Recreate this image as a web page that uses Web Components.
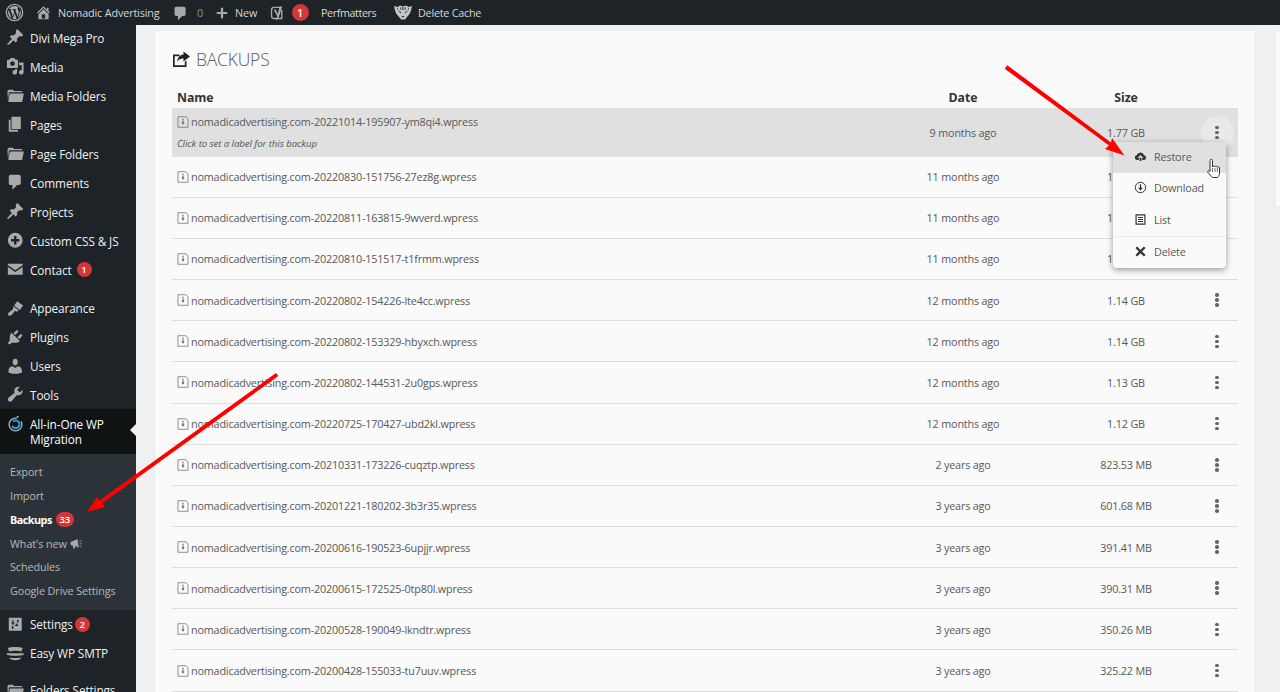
<!DOCTYPE html>
<html><head><meta charset="utf-8"><title>Backups</title>
<style>
html,body{margin:0;padding:0;height:692px;overflow:hidden;background:#f0f0f1;font-family:"Open Sans","Liberation Sans",sans-serif}
backup-app{display:block}
</style></head><body>
<backup-app></backup-app>
<script>
const ICONS={
wp:'<circle cx="10" cy="10" r="8.6" fill="none" stroke="currentColor" stroke-width="1.4"/><path fill="currentColor" d="M3.2 10c0 2.7 1.6 5 3.8 6.1L3.8 7.3C3.4 8.1 3.2 9 3.2 10zm11.4-.3c0-.8-.3-1.4-.6-1.9-.3-.5-.7-1-.7-1.5 0-.6.5-1.200 1.100-1.200h.1C13.300 3.900 11.700 3.200 10 3.200c-2.400 0-4.500 1.200-5.700 3.100h.4c.7 0 1.800-.1 1.800-.1.400 0 .4.500 0 .6 0 0-.4 0-.8.100l2.500 7.400 1.500-4.500-1.100-2.900c-.4 0-.7-.1-.7-.1-.4 0-.3-.6 0-.6 0 0 1.100.1 1.800.1.700 0 1.800-.1 1.800-.1.400 0 .4.500 0 .6 0 0-.4 0-.8.100l2.500 7.300.7-2.300c.3-.9.500-1.600.500-2.100zM10.100 10.700l-2 6c.6.200 1.200.3 1.900.3.800 0 1.600-.1 2.300-.4l-.100-.1-2.100-5.800zm5.800-3.900c0 .2.100.5.100.7 0 .7-.1 1.500-.5 2.500l-2.100 6c2-1.200 3.400-3.400 3.400-6 0-1.200-.3-2.300-.9-3.200z"/>',
home:'<path fill="currentColor" d="M16 8.500l1.530 1.530-1.060 1.060L10 4.620l-6.470 6.470-1.060-1.060L10 2.500l4 4v-2h2v4zm-6-2.460l6 5.990V18H4v-5.970zM12 17v-5H8v5h4z"/>',
comment:'<path fill="currentColor" d="M5 2h9c1.100 0 2 .9 2 2v7c0 1.100-.9 2-2 2h-2l-5 5v-5H5c-1.100 0-2-.9-2-2V4c0-1.100.9-2 2-2z"/>',
plus:'<path fill="currentColor" d="M8.400 2.500h3.200v5.900h5.900v3.200h-5.900v5.900H8.400v-5.900H2.500V8.400h5.900z"/>',
yoast:'<path fill="none" stroke="currentColor" stroke-width="1.600" d="M13 4H6a3 3 0 0 0-3 3v7a3 3 0 0 0 3 3h9V7"/><path fill="currentColor" d="M5.500 6.500h2.600l2 5.200 2.500-8.700h3l-4.300 13.300c-.5 1.500-1.500 2.500-3.300 2.700v-2.200c.9-.2 1.300-.7 1.500-1.400l.2-.7z"/>',
tiger:'<path fill="currentColor" d="M1 3l3.500 1L7 2.500l3 1 3-1L15.500 4 19 3l-1 4.500-1.500 3.500-2.500 3-2 2.500H8L6 14 3.500 11 2 7.500z"/><path fill="#1d2327" d="M5 7.500l3 1.500-.5 1.200zM15 7.500l-3 1.500.5 1.200zM8.500 13h3l-1.500 1.500zM4 4.500l1.500 2-1 .5zM16 4.500l-1.500 2 1 .5zM9.500 4h1v3h-1zM7 4.500l.8-.2.7 2.400-.7.2zM13 4.500l-.8-.2-.7 2.400.7.2z"/>',
pin:'<path fill="currentColor" d="M10.440 3.020l1.820-1.820 6.360 6.350-1.830 1.820c-1.050-.68-2.480-.57-3.410.36l-.75.75c-.92.930-1.040 2.350-.35 3.410l-1.830 1.820-2.410-2.410-2.800 2.790c-.42.420-3.380 2.710-3.800 2.290s1.860-3.390 2.280-3.810l2.790-2.790L4.100 9.360l1.830-1.820c1.050.690 2.480.570 3.400-.36l.75-.75c.930-.920 1.050-2.350.36-3.410z"/>',
media:'<path fill="currentColor" d="M13 11V4c0-.55-.45-1-1-1h-1.670L9 1H5L3.670 3H2c-.55 0-1 .45-1 1v7c0 .55.45 1 1 1h10c.55 0 1-.45 1-1zM7 4.500c1.380 0 2.500 1.120 2.500 2.500S8.380 9.500 7 9.500 4.500 8.380 4.500 7 5.620 4.500 7 4.500zM14 6h5v10.500c0 1.380-1.120 2.500-2.500 2.500S14 17.880 14 16.500s1.120-2.500 2.500-2.500c.17 0 .34.020.5.050V9h-3V6zm-4 8.050V13h2v3.500c0 1.380-1.120 2.500-2.500 2.500S7 17.880 7 16.500 8.120 14 9.500 14c.17 0 .34.020.5.050z"/>',
folder:'<path fill="currentColor" d="M1.500 6 2.800 4h4.700l1.200 1.300H17l.9 1.500H3.200L2.200 16zM4 8h15.300L17.500 17.200H2.500z"/>',
pages:'<path fill="currentColor" d="M6 15V2h10v13H6zm-1 1h8v2H3V5h2v11z"/>',
plusc:'<path fill="currentColor" fill-rule="evenodd" d="M10 2a8 8 0 1 0 0 16 8 8 0 0 0 0-16zm-1.300 3.500h2.600v3.200h3.200v2.600h-3.200v3.200H8.700v-3.200H5.500V8.700h3.200z"/>',
mail:'<path fill="currentColor" d="M2 4h16v1.700l-8 5.300-8-5.300zM2 7.600l8 5.300 8-5.300V16H2z"/>',
brush:'<path fill="currentColor" d="M12 2.500l6.500 4.500-3.500 4.800-6.300-4.500zM7.700 7.800l5.800 4.200-1.200 1.700-2.600-.7-4 4.500c-.8.900-2.200 1-3 .2-.8-.8-.7-2 .1-2.800l4.800-4.100z"/>',
plug:'<path fill="currentColor" d="M13.110 4.360L9.870 7.600 8 5.730l3.240-3.240c.35-.34 1.050-.2 1.560.32.52.51.66 1.210.31 1.550zm-8 1.770l.91-1.120 9.010 9.010-1.190.84c-.71.71-2.630 1.160-3.820 1.160H6.140L4.900 17.260c-.59.59-1.540.59-2.120 0-.59-.58-.59-1.530 0-2.120l1.240-1.240v-3.880c0-1.130.4-3.070 1.090-3.890zm7.260 3.970l3.240-3.240c.34-.35 1.040-.21 1.550.31.52.51.66 1.210.31 1.550l-3.240 3.250z"/>',
user:'<path fill="currentColor" d="M10 9.250c-2.270 0-2.730-3.440-2.730-3.440C7 4.020 7.820 2 9.970 2c2.160 0 2.980 2.020 2.710 3.810 0 0-.41 3.440-2.680 3.440zm0 2.570L12.720 10c2.390 0 4.520 2.330 4.520 4.530v2.490s-3.650 1.130-7.240 1.130c-3.650 0-7.240-1.130-7.240-1.130v-2.490c0-2.250 1.940-4.480 4.470-4.480z"/>',
wrench:'<path fill="currentColor" d="M16.680 9.770c-1.340 1.340-3.300 1.670-4.950.99l-5.410 6.520c-.99.99-2.590.99-3.570 0-.99-.98-.99-2.580 0-3.570l6.520-5.420c-.68-1.650-.35-3.610.99-4.950 1.280-1.280 3.120-1.620 4.720-1.060l-2.890 2.890 2.820 2.820 2.860-2.870c.53 1.580.18 3.390-1.090 4.650z"/>',
aio:'<circle cx="10" cy="10" r="7.500" fill="none" stroke="#a7aaad" stroke-width="1.700" stroke-dasharray="36 6"/><path fill="none" stroke="#1e9fd8" stroke-width="2.400" d="M6 11.500A4.500 4.500 0 1 0 7 6.500"/><path fill="#a7aaad" d="M11 0h3l-1.500 3z"/>',
settings:'<path fill="currentColor" fill-rule="evenodd" d="M3 3h14v14H3zM7 5v3H5.500L7.500 11 9.500 8H8V5zm5 10v-3h1.500l-2-3-2 3H12v3zM6.500 12v3h1.500v-3zM12 5v3h1.500V5z"/>',
smtp:'<path fill="currentColor" d="M2 4.500C5 3 15 3 18 4.500L16.500 8c-3-1-10-1-13 0zM1 10h18v1.800C15 13 5 13 1 11.800zM3.500 14.500c3 .9 10 .9 13 0-.5 2-3 3-6.500 3s-6-1-6.500-3z"/>',
share:'<path fill="currentColor" d="M2 5.500h6.500v1.700H3.700v9.100h10.100v-3.500l1.700-1.300V18H2zM12.500 2.500l6.500 5-6.500 5V9.500c-3 0-5 1-6.300 3.300C6.400 9 8.500 6 12.500 5.500z"/>',
file:'<path fill="none" stroke="currentColor" stroke-width="1.200" d="M1.600 1.200h13.200l3.600 3.400v14.200H1.600z"/><path fill="currentColor" d="M9 4.500h2v2H9zM9 7.500h2V11h1.700L10 14.500 7.300 11H9z"/>',
restore:'<path fill="currentColor" fill-rule="evenodd" d="M5 15.500a4 4 0 0 1-.6-7.900A5.800 5.800 0 0 1 15.500 8a3.800 3.800 0 0 1-.4 7.500h-2.600v-3.300h2L10 7.500l-4.500 4.700h2v3.300z"/><path fill="currentColor" d="M8.600 12h2.800v5H8.600z"/>',
download:'<circle cx="10" cy="10" r="8" fill="none" stroke="currentColor" stroke-width="1.500"/><path fill="currentColor" d="M9 5h2v5.500h2.800L10 14.800 6.200 10.500H9z"/>',
list:'<path fill="none" stroke="currentColor" stroke-width="1.800" d="M3.200 2.900h13.600v14.200H3.200z"/><path fill="currentColor" d="M6.200 6h7.600v1.500H6.200zM6.200 9.200h7.600v1.500H6.200zM6.200 12.400h7.600v1.500H6.200z"/>',
x:'<path fill="currentColor" d="M4.700 2.200 10 7.500l5.300-5.300 2.500 2.500L12.500 10l5.300 5.300-2.500 2.500L10 12.500l-5.300 5.300-2.500-2.500L7.500 10 2.200 4.700z"/>',
megaphone:'<path fill="currentColor" d="M2 8l11-5 2 13-6-2 .5 3.500-3-.2L6 13l-3-.5zM16 6.500l3-1.500v1.500l-3 1.500zM16.500 10H20v1.200h-3.500zM16 13l3 1.500v1.300l-3-1.500z"/>'
};
function svg(name,size,extra=''){return `<svg viewBox="0 0 20 20" width="${size}" height="${size}" style="display:block;flex:none;${extra}" aria-hidden="true">${ICONS[name]}</svg>`}

class AdminBar extends HTMLElement{constructor(){super();this.attachShadow({mode:'open'}).innerHTML=`<style>
:host{display:flex;align-items:center;height:25px;background:#1d2327;color:#d6d7d9;font-size:10.800px;letter-spacing:-.14px;flex:none}
span.t{white-space:nowrap}
.i{color:#a7aaad}
.row{display:flex;align-items:center}
b{display:flex;align-items:center;justify-content:center;width:17px;height:17px;border-radius:50%;background:#d63638;color:#fff;font-size:10px;font-weight:600}
</style>
<div class="row i" style="margin-left:5px;width:19px">${svg('wp',19)}</div>
<div class="row i" style="margin-left:11px;width:17px">${svg('home',17)}</div>
<span class="t" style="margin-left:6px;width:103px">Nomadic Advertising</span>
<div class="row i" style="margin-left:11px;width:16px;margin-top:2px">${svg('comment',17)}</div>
<span class="t" style="margin-left:9px;width:12px;color:#8c8f94">0</span>
<div class="row i" style="margin-left:6px;width:14px">${svg('plus',14)}</div>
<span class="t" style="margin-left:6px;width:24px">New</span>
<div class="row i" style="margin-left:10px;width:18px">${svg('yoast',17)}</div>
<b style="margin-left:4.500px">1</b>
<span class="t" style="margin-left:12.500px;width:58px;letter-spacing:-.42px">Perfmatters</span>
<div class="row i" style="margin-left:14px;width:19px;color:#c3c4c7">${svg('tiger',20)}</div>
<span class="t" style="margin-left:6px;letter-spacing:-.24px">Delete Cache</span>`}}
customElements.define('admin-bar',AdminBar);

class MenuItem extends HTMLElement{constructor(){super();const icon=this.getAttribute('icon');this.attachShadow({mode:'open'}).innerHTML=`<style>
:host{display:flex;align-items:center;height:var(--h,29px);color:#f0f0f1;font-size:11.800px;letter-spacing:-.12px;white-space:nowrap;box-sizing:border-box}
.ic{width:30px;display:flex;justify-content:center;color:#a7aaad;flex:none}
</style><div class="ic">${svg(icon,18.5)}</div><slot></slot>`}}
customElements.define('menu-item',MenuItem);

class CountBadge extends HTMLElement{constructor(){super();this.attachShadow({mode:'open'}).innerHTML=`<style>
:host{display:inline-flex;align-items:center;justify-content:center;min-width:15px;height:15px;box-sizing:border-box;padding:0 2px;border-radius:8px;background:#d63638;color:#fff;font-size:9.500px;font-weight:600;letter-spacing:0}
</style><slot></slot>`}}
customElements.define('count-badge',CountBadge);

class SubMenu extends HTMLElement{constructor(){super();this.attachShadow({mode:'open'}).innerHTML=`<style>
:host{display:flex;flex-direction:column;background:#2c3338;padding:6.500px 0 6.500px 10px;height:156px;box-sizing:border-box;color:#b4b9be;font-size:10.800px;letter-spacing:-.1px}
::slotted(div){height:23.750px;display:flex;align-items:center;white-space:nowrap}
</style><slot></slot>`}}
customElements.define('sub-menu',SubMenu);

class AdminSidebar extends HTMLElement{constructor(){super();this.attachShadow({mode:'open'}).innerHTML=`<style>
:host{display:block;width:135.500px;background:#1d2327;flex:none;height:667px;overflow:hidden}
</style><slot></slot>`}}
customElements.define('admin-sidebar',AdminSidebar);

class SidebarContent extends HTMLElement{constructor(){super();this.attachShadow({mode:'open'}).innerHTML=`<style>
:host{display:block}
.sep{height:9.500px}
.cur{background:#101314;height:45px;display:flex;align-items:center;position:relative;color:#fff;font-size:11.800px;letter-spacing:-.12px;line-height:15px;box-sizing:border-box;padding-top:1.500px}
.cur .ic{width:30px;display:flex;justify-content:center;flex:none;margin-top:-15px}
.cur:after{content:"";position:absolute;right:0;top:50%;margin-top:-7px;border:6.500px solid transparent;border-right-color:#f0f0f1;border-left:0}
count-badge{margin-left:4px}
sub-menu b{font-weight:700;color:#fff;letter-spacing:-.5px}
</style>
<menu-item icon="pin" style="--h:27px;padding-bottom:2px">Divi Mega Pro</menu-item>
<menu-item icon="media">Media</menu-item>
<menu-item icon="folder">Media Folders</menu-item>
<menu-item icon="pages">Pages</menu-item>
<menu-item icon="folder">Page Folders</menu-item>
<menu-item icon="comment">Comments</menu-item>
<menu-item icon="pin">Projects</menu-item>
<menu-item icon="plusc">Custom CSS &amp; JS</menu-item>
<menu-item icon="mail">Contact<count-badge style="margin-left:5px">1</count-badge></menu-item>
<div class="sep"></div>
<menu-item icon="brush">Appearance</menu-item>
<menu-item icon="plug">Plugins</menu-item>
<menu-item icon="user">Users</menu-item>
<menu-item icon="wrench" style="--h:28px">Tools</menu-item>
<div class="cur"><div class="ic">${svg('aio',17)}</div><div>All-in-One WP<br>Migration</div></div>
<sub-menu>
<div>Export</div><div>Import</div>
<div><b>Backups</b><count-badge style="min-width:18px">33</count-badge></div>
<div>What's new<span style="color:#a7aaad;margin-left:2px">${svg('megaphone',13)}</span></div>
<div>Schedules</div><div>Google Drive Settings</div>
</sub-menu>
<menu-item icon="settings">Settings<count-badge style="margin-left:2px">2</count-badge></menu-item>
<menu-item icon="smtp">Easy WP SMTP</menu-item>
<div style="height:8px"></div>
<menu-item icon="folder">Folders Settings</menu-item>`}}
customElements.define('sidebar-content',SidebarContent);

const GRID='grid-template-columns:1fr 130px 168px 42px;';
class BackupRow extends HTMLElement{constructor(){super();
const a=n=>this.getAttribute(n),active=this.hasAttribute('active');
this.attachShadow({mode:'open'}).innerHTML=`<style>
:host{display:grid;${GRID}align-items:center;height:${active?'48.600px':'41.170px'};box-sizing:border-box;${active?'background:#e0e0e0;':'border-bottom:1px solid #dedede;'}color:#585858;font-size:10.800px;letter-spacing:-.175px}
.n{padding-left:5px;display:flex;flex-direction:column}
.f{display:flex;align-items:center;gap:2px;white-space:nowrap}
.l{font-style:italic;font-size:9.700px;margin-top:${active?'8px':'0'};color:#555;letter-spacing:-.1px}
.d{text-align:center}.s{text-align:center;padding-left:28px}
.k{display:flex;justify-content:center;align-items:center;height:33px;width:33px;border-radius:50%;margin-left:4.500px;${active?'background:#e9e9e9':''}}
.k i{display:block;width:3.500px;height:3.500px;border-radius:50%;background:#666;box-shadow:0 -5px 0 #666,0 5px 0 #666}
</style>
<div class="n"><div class="f">${svg('file',12,'color:#666')}${a('name')}</div>${active?'<div class="l">Click to set a label for this backup</div>':''}</div>
<div class="d">${a('date')}</div><div class="s">${a('size')}</div><div class="k"><i></i></div>`}}
customElements.define('backup-row',BackupRow);

class ActionMenu extends HTMLElement{constructor(){super();this.attachShadow({mode:'open'}).innerHTML=`<style>
:host{position:absolute;left:1112.500px;top:142px;width:113.500px;height:125.500px;background:#fafafa;border-radius:4px;box-shadow:0 2px 6px rgba(0,0,0,.4);font-size:10.800px;color:#585858;letter-spacing:-.15px;overflow:hidden;z-index:3;display:flex;flex-direction:column}
.it{height:31px;display:flex;align-items:center;padding-left:21px;gap:7.500px;flex:none;padding-bottom:2px;box-sizing:border-box}
.it.li{padding-bottom:0}
.it svg{color:#333}
.it.h{background:#e0e0e0}
hr{margin:1px 0 0;border:0;border-top:1px solid #ececec}
</style>
<div class="it h">${svg('restore',13)}Restore</div>
<div class="it">${svg('download',13)}Download</div>
<div class="it li">${svg('list',13)}List</div>
<hr>
<div class="it">${svg('x',13)}Delete</div>`}}
customElements.define('action-menu',ActionMenu);

class BackupsCard extends HTMLElement{constructor(){super();
const rows=[
['20220830-151756-27ez8g','11 months ago','1.17 GB'],['20220811-163815-9wverd','11 months ago','1.16 GB'],['20220810-151517-t1frmm','11 months ago','1.15 GB'],
['20220802-154226-lte4cc','12 months ago','1.14 GB'],['20220802-153329-hbyxch','12 months ago','1.14 GB'],['20220802-144531-2u0gps','12 months ago','1.13 GB'],['20220725-170427-ubd2kl','12 months ago','1.12 GB'],
['20210331-173226-cuqztp','2 years ago','823.53 MB'],['20201221-180202-3b3r35','3 years ago','601.68 MB'],['20200616-190523-6upjjr','3 years ago','391.41 MB'],['20200615-172525-0tp80l','3 years ago','390.31 MB'],['20200528-190049-lkndtr','3 years ago','350.26 MB'],['20200428-155033-tu7uuv','3 years ago','325.22 MB']];
this.attachShadow({mode:'open'}).innerHTML=`<style>
:host{display:block;width:1100px;box-sizing:border-box;background:#fafafa;box-shadow:0 0 0 1px #ececec;padding:0 17px;height:700px;flex:none}
h1{margin:0;height:56px;display:flex;align-items:center;gap:5px;font-size:17.500px;font-weight:300;color:#5a5a5a;letter-spacing:-.2px;padding-bottom:1px;box-sizing:border-box}
h1 svg{color:#222;margin-left:-1px}
.h{display:grid;${GRID}height:21px;align-items:center;font-weight:700;font-size:12.300px;color:#333;letter-spacing:-.05px}
.h div:first-child{padding-left:5px}.h div:nth-child(2){text-align:center}.h div:nth-child(3){text-align:center;padding-left:28px}
</style>
<h1>${svg('share',20)}BACKUPS</h1>
<div class="h"><div>Name</div><div>Date</div><div>Size</div></div>
<backup-row active name="nomadicadvertising.com-20221014-195907-ym8qi4.wpress" date="9 months ago" size="1.77 GB"></backup-row>
${rows.map(r=>`<backup-row name="nomadicadvertising.com-${r[0]}.wpress" date="${r[1]}" size="${r[2]}"></backup-row>`).join('')}`}}
customElements.define('backups-card',BackupsCard);

class BackupApp extends HTMLElement{constructor(){super();this.attachShadow({mode:'open'}).innerHTML=`<style>
:host{display:flex;flex-direction:column;height:692px;overflow:hidden;position:relative}
.body{display:flex;flex:1;min-height:0}
.main{flex:1;display:flex;padding:6px 0 0 19.500px;gap:21px;overflow:hidden}
.side{width:10px;height:176px;background:#fafafa;box-shadow:0 0 0 1px #ececec;flex:none}
.over{position:absolute;left:0;top:0;z-index:5;pointer-events:none}
</style>
<admin-bar></admin-bar>
<div class="body"><admin-sidebar><sidebar-content></sidebar-content></admin-sidebar>
<div class="main"><backups-card></backups-card><div class="side"></div></div></div>
<action-menu></action-menu>
<svg class="over" width="1280" height="692" viewBox="0 0 1280 692" aria-hidden="true">
<path fill="#f00" d="M1007.300 65.200 1111 142.500 1112 138 1124.500 155.500 1105 149 1109 145.500 1004.700 68.800z"/>
<path fill="#f00" d="M276 373 99.500 500.500 97 497 87 512 105 507 102 503.500 278.300 376z"/>
<g transform="translate(1206 159)"><path fill="#fff" stroke="#333" stroke-width="1" stroke-linejoin="round" d="M4 1.500c0-1.500 2.500-1.500 2.500 0V8c0-1 2.200-1.200 2.500 0 0-1 2.200-1 2.300.3 .2-.8 2-.8 2.200.5v5.200c0 2-1 3.500-2 4.500H6.500L2 13.500c-1-1.500 .5-2.500 1.500-1.500L4 12.500z"/><path stroke="#333" stroke-width=".7" d="M6.500 9v4M9 9v4M11.300 9v4"/></g>
</svg>`}}
customElements.define('backup-app',BackupApp);
</script>
</body></html>
